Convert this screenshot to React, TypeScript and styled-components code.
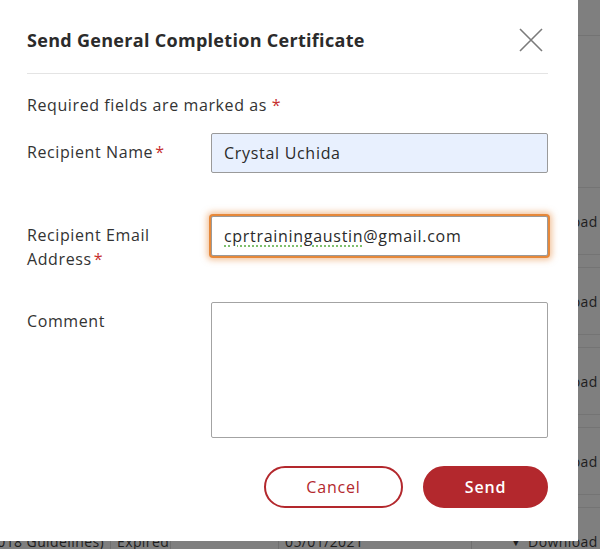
import React from "react";
import styled, { createGlobalStyle } from "styled-components";

const Global = createGlobalStyle`
  html, body { margin: 0; padding: 0; }
  body {
    width: 600px;
    height: 549px;
    overflow: hidden;
    font-family: "Open Sans", "DejaVu Sans", sans-serif;
    background: #7f7f7f;
  }
  #root { position: relative; width: 600px; height: 549px; }
`;

/* ---------- dimmed page behind the dialog ---------- */
const Page = styled.div`
  width: 600px;
  height: 549px;
  background: #7f7f7f;
  color: #1d1d1d;
  font-size: 14px;
  letter-spacing: 0.4px;
  overflow: hidden;
`;

const TopBand = styled.div`
  height: 35px;
  border-bottom: 1px solid #737373;
`;

const HeadBand = styled.div`
  height: 151px;
`;

const Row = styled.div`
  height: 66px;
  display: grid;
  grid-template-columns: 110px 60px 108px 193px 1fr;
  align-items: center;
  border-top: 1px solid #747474;
  border-bottom: 1px solid #747474;
`;

const RowGap = styled.div`
  height: 12px;
`;

const Cell = styled.div<{ $sep?: boolean; $end?: boolean }>`
  height: 100%;
  display: flex;
  align-items: center;
  justify-content: ${(p) => (p.$end ? "flex-end" : "flex-start")};
  padding: 0 6px;
  white-space: nowrap;
  overflow: hidden;
  border-left: ${(p) => (p.$sep ? "1px solid #6f6f6f" : "none")};
`;

const Caret = styled.span`
  font-size: 10px;
  margin: 0 8px 0 34px;
`;

/* ---------- dialog ---------- */
const Dialog = styled.div`
  position: absolute;
  left: 0;
  top: 0;
  width: 578px;
  height: 541px;
  box-sizing: border-box;
  background: #ffffff;
  padding: 0 30px 0 27px;
  color: #333333;
  font-family: "Open Sans", "DejaVu Sans", sans-serif;
`;

const Header = styled.div`
  height: 66px;
  padding-top: 7px;
  display: flex;
  align-items: center;
  justify-content: space-between;
  border-bottom: 1px solid #e4e4e4;
`;

const Title = styled.h2`
  margin: 0;
  font-size: 18px;
  font-weight: 700;
  color: #2b2b2b;
  letter-spacing: 0.3px;
`;

const CloseButton = styled.button`
  border: 0;
  background: none;
  padding: 0;
  margin-right: 5px;
  width: 24px;
  height: 24px;
  display: flex;
  cursor: pointer;
`;

const Body = styled.div`
  padding-top: 19px;
`;

const Note = styled.p`
  margin: 0 0 16px;
  font-size: 16px;
  line-height: 24px;
  letter-spacing: 0.6px;
`;

const Star = styled.span<{ $gap?: number }>`
  color: #c62f2f;
  margin-left: ${(p) => p.$gap ?? 2}px;
`;

const FormRow = styled.div<{ $h: number }>`
  display: grid;
  grid-template-columns: 184px 337px;
  height: ${(p) => p.$h}px;
`;

const Label = styled.label`
  font-size: 16px;
  line-height: 24px;
  letter-spacing: 0.6px;
  padding-top: 7px;
`;

const Field = styled.div<{ $filled?: boolean; $focus?: boolean }>`
  box-sizing: border-box;
  height: 40px;
  padding: 0 12px;
  display: flex;
  align-items: center;
  font-size: 16px;
  letter-spacing: 0.7px;
  color: #2a2a2a;
  background: ${(p) => (p.$filled ? "#e8f0fe" : "#ffffff")};
  border: 1px solid #9a9a9a;
  border-radius: 2px;
  box-shadow: ${(p) =>
    p.$focus ? "0 0 0 2px #e6883a, 0 0 6px 4px rgba(230, 136, 58, 0.5)" : "none"};
`;

const Misspelled = styled.span`
  text-decoration: underline dotted #5fb04a;
  text-underline-offset: 4px;
`;

const TextArea = styled.textarea`
  box-sizing: border-box;
  width: 337px;
  height: 136px;
  border: 1px solid #a3a3a3;
  border-radius: 2px;
  resize: none;
  font-family: inherit;
  font-size: 15px;
  padding: 8px 12px;
`;

const Actions = styled.div`
  margin-top: 28px;
  display: flex;
  justify-content: flex-end;
  gap: 20px;
`;

const Pill = styled.button<{ $primary?: boolean; $w: number }>`
  box-sizing: border-box;
  width: ${(p) => p.$w}px;
  height: 42px;
  border-radius: 21px;
  border: 2px solid #b3282d;
  background: ${(p) => (p.$primary ? "#b3282d" : "#ffffff")};
  color: ${(p) => (p.$primary ? "#ffffff" : "#b3282d")};
  font-family: inherit;
  font-size: 16px;
  letter-spacing: 0.8px;
  font-weight: ${(p) => (p.$primary ? 600 : 500)};
  cursor: pointer;
`;

const rows = [0, 1, 2, 3];

function TableRow({ full }: { full?: boolean }) {
  return (
    <Row>
      <Cell $end>{full ? "018 Guidelines)" : ""}</Cell>
      <Cell $sep>{full ? "Expired" : ""}</Cell>
      <Cell $sep />
      <Cell $sep>{full ? "05/01/2021" : ""}</Cell>
      <Cell $sep>
        <Caret>▼</Caret>Download
      </Cell>
    </Row>
  );
}

export default function App() {
  return (
    <>
      <Global />
      <Page aria-hidden="true">
        <TopBand />
        <HeadBand />
        {rows.map((r) => (
          <React.Fragment key={r}>
            <TableRow />
            <RowGap />
          </React.Fragment>
        ))}
        <TableRow full />
      </Page>

      <Dialog role="dialog" aria-label="Send General Completion Certificate">
        <Header>
          <Title>Send General Completion Certificate</Title>
          <CloseButton aria-label="Close">
            <svg width="24" height="24" viewBox="0 0 24 24">
              <path d="M1 1 L23 23 M23 1 L1 23" stroke="#7b7b7b" strokeWidth="1.6" fill="none" />
            </svg>
          </CloseButton>
        </Header>
        <Body>
          <Note>
            Required fields are marked as <Star $gap={0}>*</Star>
          </Note>
          <FormRow $h={83}>
            <Label>
              Recipient Name<Star>*</Star>
            </Label>
            <Field $filled role="textbox">Crystal Uchida</Field>
          </FormRow>
          <FormRow $h={86}>
            <Label>
              Recipient Email
              <br />
              Address<Star>*</Star>
            </Label>
            <Field $focus role="textbox">
              <Misspelled>cprtrainingaustin</Misspelled>@gmail.com
            </Field>
          </FormRow>
          <FormRow $h={136}>
            <Label>Comment</Label>
            <TextArea />
          </FormRow>
          <Actions>
            <Pill $w={139}>Cancel</Pill>
            <Pill $primary $w={125}>Send</Pill>
          </Actions>
        </Body>
      </Dialog>
    </>
  );
}
